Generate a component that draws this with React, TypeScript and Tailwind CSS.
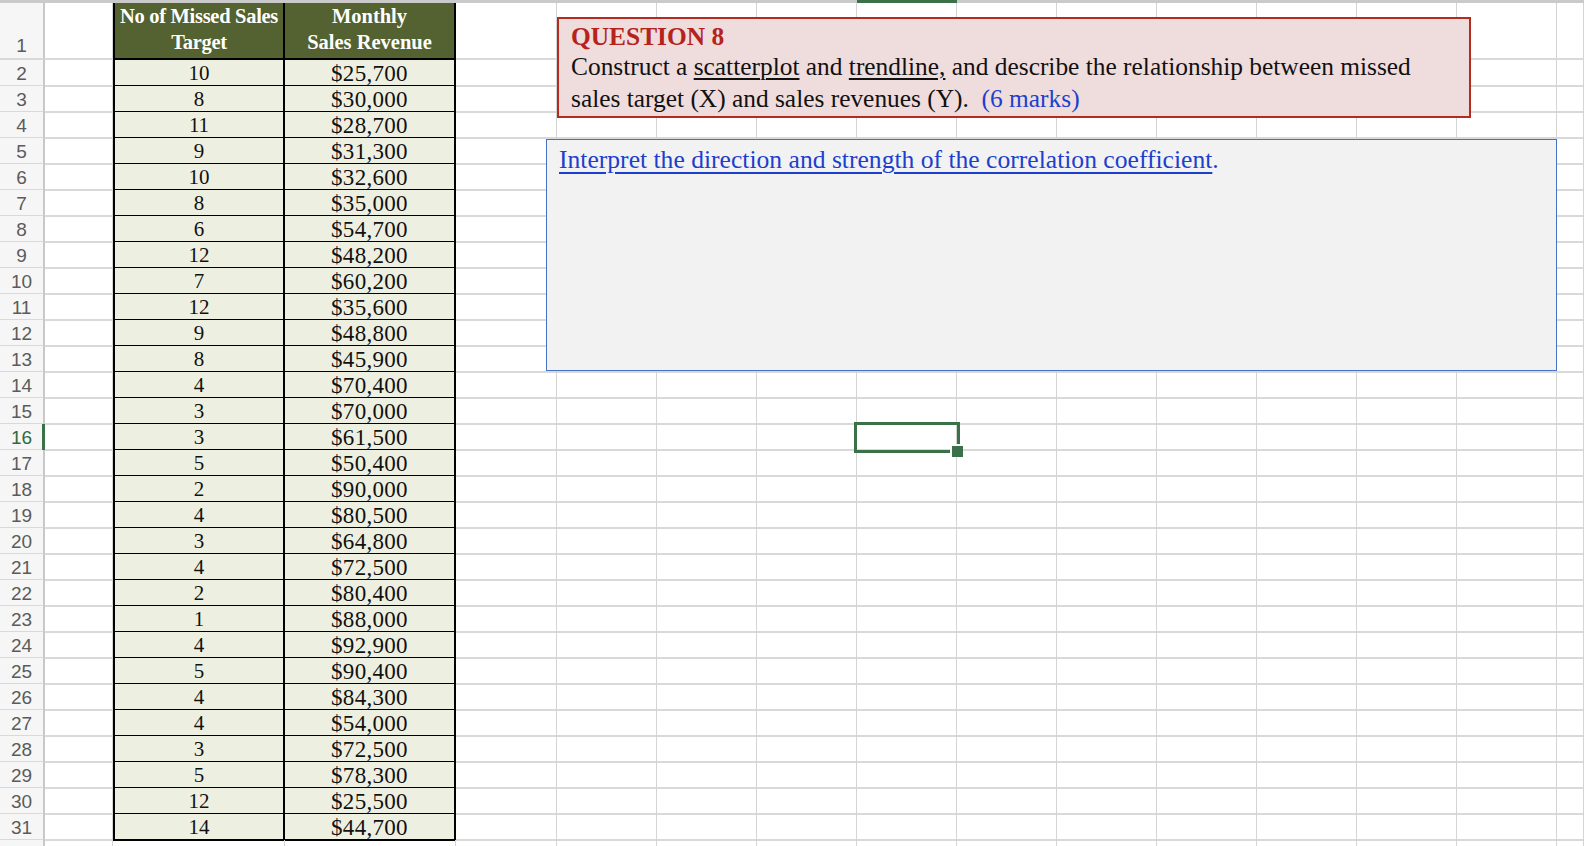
import React from 'react';

const COLS =
  'grid grid-cols-[45px_68px_172px_171px_101px_100px_100px_100px_100px_100px_100px_100px_100px_100px_100px_27px]';

const serif = { fontFamily: '"Liberation Serif", "DejaVu Serif", serif' };
const sans = { fontFamily: '"Liberation Sans", Arial, sans-serif' };

const missed = [10, 8, 11, 9, 10, 8, 6, 12, 7, 12, 9, 8, 4, 3, 3, 5, 2, 4, 3, 4, 2, 1, 4, 5, 4, 4, 3, 5, 12, 14];
const revenue = [
  '$25,700', '$30,000', '$28,700', '$31,300', '$32,600', '$35,000', '$54,700', '$48,200', '$60,200', '$35,600',
  '$48,800', '$45,900', '$70,400', '$70,000', '$61,500', '$50,400', '$90,000', '$80,500', '$64,800', '$72,500',
  '$80,400', '$88,000', '$92,900', '$90,400', '$84,300', '$54,000', '$72,500', '$78,300', '$25,500', '$44,700',
];

const ACTIVE_ROW = 16;

function RowHeader({ n, bottom }: { n: number; bottom?: boolean }) {
  const active = n === ACTIVE_ROW;
  return (
    <div
      className={`relative flex justify-center bg-[#f6f6f6] border-r-2 border-r-[#c8c8c8] border-b-2 border-b-[#d9d9d9] text-[19px] leading-none ${
        bottom ? 'items-end pb-[3px]' : 'items-center pt-[1px]'
      } ${active ? 'text-[#2e6b40]' : 'text-[#5b5b5b]'}`}
      style={sans}
    >
      {n}
      {active && <div className="absolute right-[-2px] top-0 bottom-[-2px] w-[3px] bg-[#3b7149]" />}
    </div>
  );
}

function Blank() {
  return <div className="border-r border-r-[#d4d4d4] border-b-2 border-b-[#d9d9d9]" />;
}

function Fillers() {
  return (
    <>
      {Array.from({ length: 12 }, (_, i) => (
        <Blank key={i} />
      ))}
    </>
  );
}

function HeaderRow() {
  return (
    <div className={`${COLS} h-[57px]`}>
      <RowHeader n={1} bottom />
      <Blank />
      <div
        className="flex items-end justify-center pb-[3px] bg-[#546131] text-white font-bold text-[20.5px] leading-[26px] text-center border-l-2 border-r-2 border-b-2 border-black tracking-[-0.3px]"
        style={serif}
      >
        No of Missed Sales
        <br />
        Target
      </div>
      <div
        className="flex items-end justify-center pb-[3px] bg-[#546131] text-white font-bold text-[20.5px] leading-[26px] text-center border-r-2 border-b-2 border-black"
        style={serif}
      >
        Monthly
        <br />
        Sales Revenue
      </div>
      <Fillers />
    </div>
  );
}

function DataRow({ n, x, y }: { n: number; x: number; y: string }) {
  return (
    <div className={`${COLS} h-[26px]`}>
      <RowHeader n={n} />
      <Blank />
      <div
        className="flex items-center justify-center pt-[2px] bg-[#edf0e1] text-[#111] text-[21px] leading-none border-l-2 border-r-2 border-b-2 border-black"
        style={serif}
      >
        {x}
      </div>
      <div
        className="flex items-center justify-center pt-[2px] bg-[#edf0e1] text-[#111] text-[23px] leading-none border-r-2 border-b-2 border-black tracking-[0.3px]"
        style={serif}
      >
        {y}
      </div>
      <Fillers />
    </div>
  );
}

function EmptyRow({ n }: { n: number }) {
  return (
    <div className={`${COLS} h-[26px]`}>
      <RowHeader n={n} />
      <Blank />
      <Blank />
      <Blank />
      <Fillers />
    </div>
  );
}

export default function App() {
  return (
    <div className="relative w-[1584px] h-[846px] overflow-hidden bg-white">
      {/* column header edge */}
      <div className="flex h-[3px] bg-[#cacaca]">
        <div className="w-[857px]" />
        <div className="w-[100px] bg-[#3b7149]" />
      </div>

      <HeaderRow />
      {missed.map((x, i) => (
        <DataRow key={i} n={i + 2} x={x} y={revenue[i]} />
      ))}
      <EmptyRow n={32} />

      {/* question shape */}
      <div
        className="absolute left-[557px] top-[17px] w-[914px] h-[101px] bg-[#efdcdc] border-2 border-[#b62b20] pl-[12px] pt-[3px] text-[#111] text-[25.4px]"
        style={serif}
      >
        <div className="font-bold text-[#b5231a] leading-[28px]">QUESTION 8</div>
        <div className="leading-[32px]">
          Construct a <span className="underline decoration-2 underline-offset-[3px]">scatterplot</span> and{' '}
          <span className="underline decoration-2 underline-offset-[3px]">trendline,</span> and describe the
          relationship between missed
        </div>
        <div className="leading-[32px]">
          sales target (X) and sales revenues (Y).&nbsp; <span className="text-[#1c3fce]">(6 marks)</span>
        </div>
      </div>

      {/* answer shape */}
      <div
        className="absolute left-[546px] top-[139px] w-[1011px] h-[232px] bg-[#f2f2f2] border border-[#4472c4] pl-[12px] pt-[4px] text-[25.6px] leading-[32px] text-[#1c3fce]"
        style={serif}
      >
        <span className="underline decoration-2 underline-offset-[4px]">
          Interpret the direction and strength of the correlation coefficient
        </span>
        .
      </div>

      {/* selected cell */}
      <div className="absolute left-[854px] top-[422px] w-[106px] h-[31px] border-[3px] border-[#3b7149]" />
      <div className="absolute left-[950px] top-[444px] w-[13px] h-[13px] bg-[#3b7149] border-l-2 border-t-2 border-white" />
    </div>
  );
}
